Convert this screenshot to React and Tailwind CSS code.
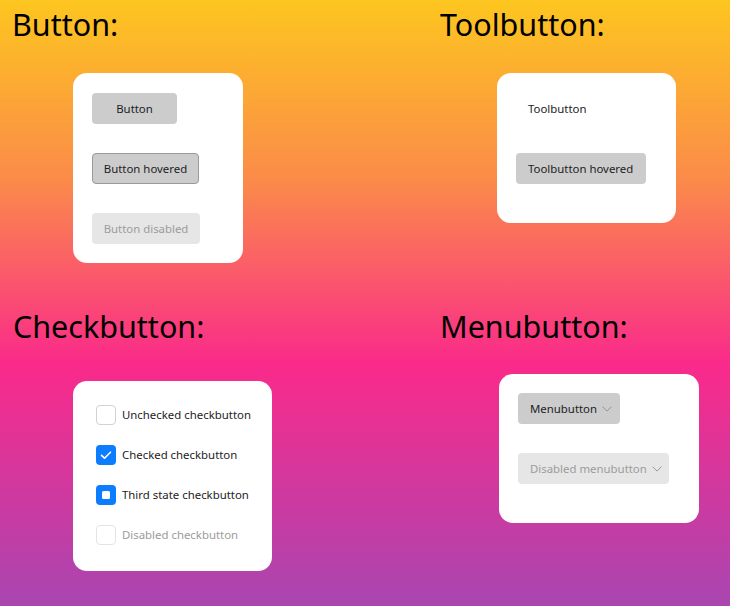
import React from "react";

const Chevron = ({ className }) => (
  <svg viewBox="0 0 12 12" className={className} fill="none" stroke="currentColor" strokeWidth="1" strokeLinecap="round" strokeLinejoin="round">
    <path d="M1 3.5l5 5 5-5" />
  </svg>
);

const Check = ({ state, disabled, label }) => {
  let box;
  if (state === "checked") {
    box = (
      <span className="flex h-[20px] w-[20px] shrink-0 items-center justify-center rounded-[4px] bg-[#0c7dff]">
        <svg viewBox="0 0 20 20" className="h-[20px] w-[20px]" fill="none" stroke="white" strokeWidth="1.6" strokeLinecap="round" strokeLinejoin="round">
          <path d="M5.5 10.3l3 2.9 6-6" />
        </svg>
      </span>
    );
  } else if (state === "third") {
    box = (
      <span className="flex h-[20px] w-[20px] shrink-0 items-center justify-center rounded-[4px] bg-[#0c7dff]">
        <span className="h-[8px] w-[8px] rounded-[1.5px] bg-white" />
      </span>
    );
  } else {
    box = (
      <span
        className={
          "h-[20px] w-[20px] shrink-0 rounded-[4px] border bg-white " +
          (disabled ? "border-[#e4e4e4]" : "border-[#d2d2d2]")
        }
      />
    );
  }
  return (
    <div className="flex h-[20px] items-center gap-[6px] whitespace-nowrap">
      {box}
      <span className={disabled ? "text-[#9c9c9c]" : "text-[#1c1c24]"}>{label}</span>
    </div>
  );
};

export default function App() {
  return (
    <div className="h-[606px] w-[730px] overflow-hidden bg-[linear-gradient(to_bottom,#fdc61f_0%,#fb8a4a_30%,#fa2a8a_60%,#a946b1_100%)] font-['Segoe_UI','Noto_Sans',sans-serif] text-[11.4px] text-[#1c1c24]">
      <div className="grid grid-cols-[427px_303px]">
        {/* Button */}
        <div className="h-[300px]">
          <h2 className="pl-[12px] pt-[4px] text-[30.5px] leading-[40px] text-black">Button:</h2>
          <div className="ml-[73px] mt-[29px] flex h-[190px] w-[170px] flex-col gap-[29px] rounded-[14px] bg-white pl-[19px] pt-[20px]">
            <button className="h-[31px] w-[85px] whitespace-nowrap rounded-[4px] bg-[#cccccc]">Button</button>
            <button className="h-[31px] w-[107px] whitespace-nowrap rounded-[4px] border border-[#9a9a9a] bg-[#cccccc]">Button hovered</button>
            <button className="h-[31px] w-[108px] whitespace-nowrap rounded-[4px] bg-[#e6e6e6] text-[#9c9c9c]">Button disabled</button>
          </div>
        </div>

        {/* Toolbutton */}
        <div className="h-[300px]">
          <h2 className="pl-[13px] pt-[4px] text-[30.5px] leading-[40px] text-black">Toolbutton:</h2>
          <div className="ml-[70px] mt-[29px] flex h-[150px] w-[179px] flex-col gap-[29px] rounded-[14px] bg-white pl-[19px] pt-[20px]">
            <button className="h-[31px] w-fit whitespace-nowrap rounded-[4px] px-[12px] text-left">Toolbutton</button>
            <button className="h-[31px] w-[130px] whitespace-nowrap rounded-[4px] bg-[#cccccc] px-[12px] text-left">Toolbutton hovered</button>
          </div>
        </div>

        {/* Checkbutton */}
        <div className="h-[306px]">
          <h2 className="pl-[13px] pt-[6px] text-[30.5px] leading-[40px] text-black">Checkbutton:</h2>
          <div className="ml-[73px] mt-[35px] flex h-[190px] w-[199px] flex-col gap-[20px] rounded-[14px] bg-white pl-[23px] pt-[24px]">
            <Check state="unchecked" label="Unchecked checkbutton" />
            <Check state="checked" label="Checked checkbutton" />
            <Check state="third" label="Third state checkbutton" />
            <Check state="unchecked" disabled label="Disabled checkbutton" />
          </div>
        </div>

        {/* Menubutton */}
        <div className="h-[306px]">
          <h2 className="pl-[13px] pt-[6px] text-[30.5px] leading-[40px] text-black">Menubutton:</h2>
          <div className="ml-[72px] mt-[28px] flex h-[149px] w-[200px] flex-col gap-[29px] rounded-[14px] bg-white pl-[19px] pt-[19px]">
            <button className="flex h-[31px] w-[102px] items-center gap-[5px] whitespace-nowrap rounded-[4px] bg-[#cccccc] pl-[12px] pr-[8px]">
              <span>Menubutton</span>
              <Chevron className="h-[10px] w-[10px] shrink-0 text-[#8a8a8a]" />
            </button>
            <button className="flex h-[31px] w-[151px] items-center gap-[5px] whitespace-nowrap rounded-[4px] bg-[#e6e6e6] pl-[12px] pr-[8px] text-[#9c9c9c]">
              <span>Disabled menubutton</span>
              <Chevron className="h-[10px] w-[10px] shrink-0 text-[#8a8a8a]" />
            </button>
          </div>
        </div>
      </div>
    </div>
  );
}
